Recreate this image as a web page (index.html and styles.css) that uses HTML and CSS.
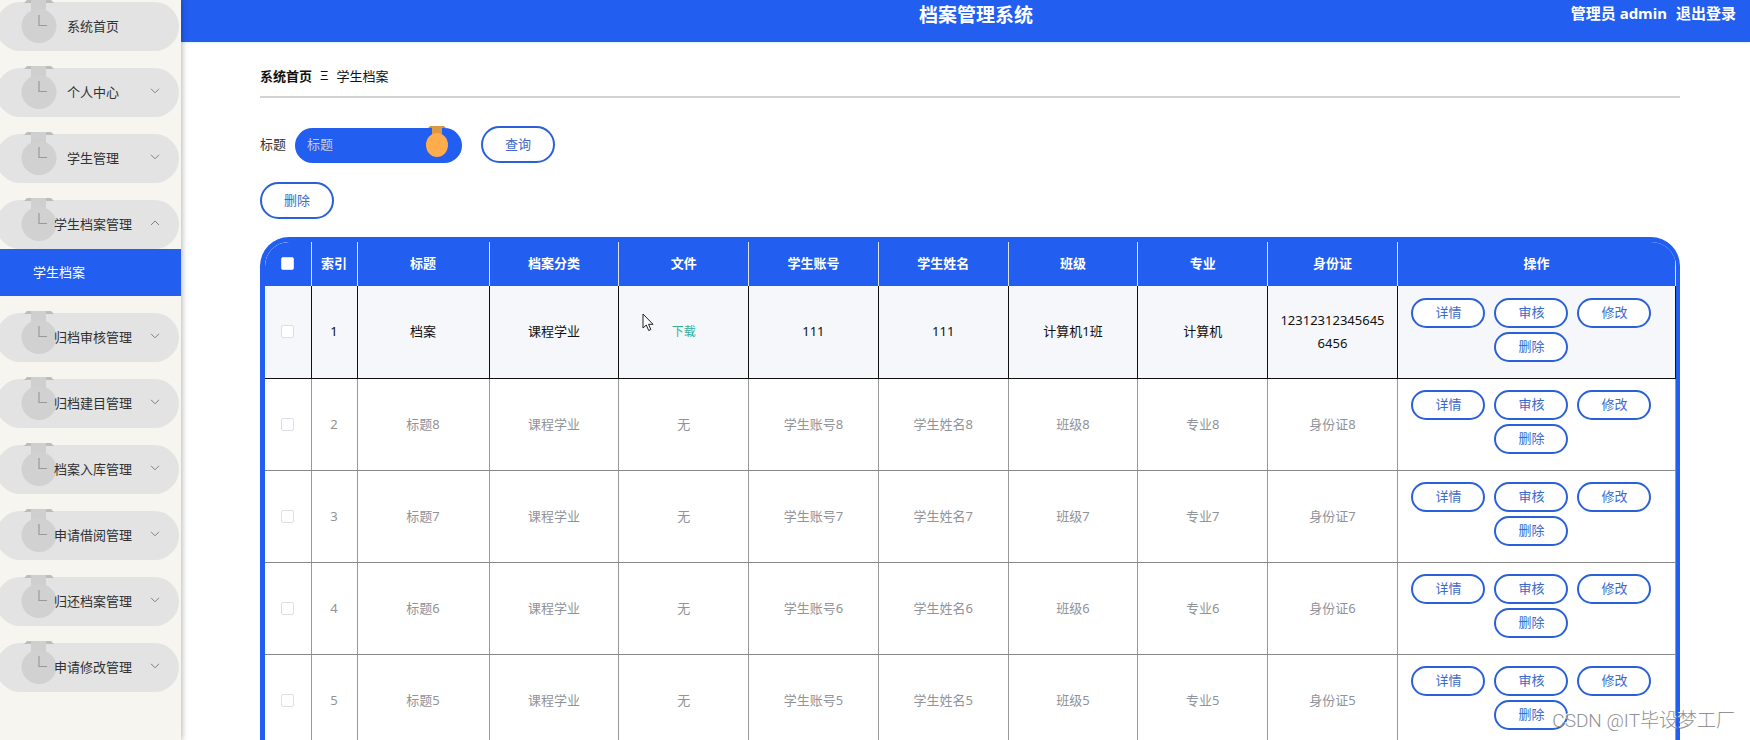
FILE: index.html
```
<!DOCTYPE html>
<html lang="zh-CN">
<head>
<meta charset="utf-8">
<title>档案管理系统</title>
<link rel="stylesheet" href="styles.css">
</head>
<body>
<svg width="0" height="0" class="defs" aria-hidden="true">
  <symbol id="watch" viewBox="0 0 36 44">
    <path d="M6 0h24l3 3H3z" fill="#bdbdbd"/>
    <path d="M10 0h15v12H10z" fill="#cfcfcf"/>
    <ellipse cx="18" cy="26" rx="17.5" ry="17" fill="#d1d1d1"/>
    <path d="M18 15v10.500h8" fill="none" stroke="#999" stroke-width="1.200"/>
  </symbol>
  <symbol id="down" viewBox="0 0 10 6"><path d="M1 .8l4 4 4-4" fill="none" stroke="#808080"/></symbol>
  <symbol id="up" viewBox="0 0 10 6"><path d="M1 5l4-4 4 4" fill="none" stroke="#808080"/></symbol>
</svg>
<div class="app">
  <nav class="side" id="side"></nav>
  <div class="page">
    <header class="top">
      <h1 class="title">档案管理系统</h1>
      <div class="user"><span>管理员 admin</span><a href="#">退出登录</a></div>
    </header>
    <main class="main">
      <div class="crumbs"><a href="#">系统首页</a><span class="sep">Ξ</span><span>学生档案</span></div>
      <form class="search">
        <label for="q">标题</label>
        <div class="field">
          <input id="q" type="text" placeholder="标题">
          <svg class="medal" viewBox="0 0 22 32" aria-hidden="true">
            <path d="M4 0h14l2 2H2z" fill="#d98f2b"/><path d="M6 0h10v9H6z" fill="#dc9747"/>
            <ellipse cx="11" cy="19" rx="11" ry="12" fill="#ffac4d"/>
          </svg>
        </div>
        <button type="button" class="btn big">查询</button>
      </form>
      <div class="tools"><button type="button" class="btn big">删除</button></div>
      <div class="frame">
        <table class="grid">
          <colgroup><col class="c-s"><col class="c-s"><col class="c-t"><col class="c-m"><col class="c-m"><col class="c-m"><col class="c-m"><col class="c-m"><col class="c-m"><col class="c-m"><col></colgroup>
          <thead><tr><th><input type="checkbox" aria-label="全选"></th><th>索引</th><th>标题</th><th>档案分类</th><th>文件</th><th>学生账号</th><th>学生姓名</th><th>班级</th><th>专业</th><th>身份证</th><th>操作</th></tr></thead>
          <tbody id="rows"></tbody>
        </table>
      </div>
    </main>
  </div>
  <svg class="cursor" viewBox="0 0 12 19" aria-hidden="true"><path d="M1 1v14l3.300-3 2.400 5.500 2.200-1-2.400-5.200H11z" fill="#fff" stroke="#222"/></svg>
  <div class="mark">CSDN @IT毕设梦工厂</div>
</div>
<script src="app.js"></script>
</body>
</html>
```
FILE: styles.css
```
* { box-sizing: border-box; }
body {
  margin: 0;
  font: 13px/20px "Noto Sans", "Noto Sans CJK SC", sans-serif;
  color: #333;
  background: #fff;
}
button, input { font: inherit; }
a { color: inherit; text-decoration: none; }
.defs { position: absolute; }
.app { position: relative; display: flex; height: 100vh; overflow: hidden; }

.side {
  flex: 0 0 181px;
  display: flex;
  flex-direction: column;
  gap: 17px;
  padding-top: 2px;
  background: #f6f5ef;
  box-shadow: 1px 0 6px rgba(0, 0, 0, .3);
  z-index: 2;
}
.item {
  position: relative;
  display: block;
  width: 183px;
  height: 49px;
  margin-left: -4px;
  padding: 0 0 2px 11px;
  border: 0;
  border-radius: 25px;
  background: #e3e3e3;
  color: #303133;
  text-align: center;
}
.item .watch { position: absolute; left: 25px; top: -2px; width: 36px; height: 44px; }
.item .label { position: relative; }
.item .arrow { position: absolute; right: 19px; top: 20px; width: 10px; height: 6px; }
.sub {
  display: flex;
  align-items: center;
  height: 47px;
  padding: 0 0 2px 33px;
  background: #225ef0;
  color: #fff;
}

.page { flex: 1; min-width: 0; display: flex; flex-direction: column; }
.top {
  position: relative;
  flex: 0 0 42px;
  padding: 4px 14px 0 35px;
  background: #225ef0;
  color: #fff;
  box-shadow: 0 1px 2px #d5f3fa;
  display: grid;
  grid-template-columns: 1fr auto 1fr;
}
.title { grid-column: 2; margin: 0; font-size: 19px; line-height: 22px; }
.user { display: flex; justify-content: flex-end; gap: 9px; font-size: 15px; line-height: 18px; font-weight: 700; }
.main { flex: 1; min-height: 0; padding: 24px 70px 0 79px; overflow: auto; scrollbar-width: none; }
.crumbs { display: flex; gap: 8px; padding-bottom: 10px; border-bottom: 2px solid #d2d2d2; color: #111; }
.crumbs a { font-weight: 700; }
.sep { font-family: "Liberation Sans", sans-serif; }
.search { display: flex; align-items: center; margin-top: 28px; }
.search label { padding-bottom: 2px; }
.field { position: relative; width: 167px; margin: 2px 19px 0 9px; }
.field input {
  display: block;
  width: 100%;
  height: 35px;
  padding: 0 12px 3px;
  border: 0;
  border-radius: 18px;
  background: #225ef0;
  color: #fff;
}
.field input::placeholder { color: #c5cbdc; opacity: 1; }
.medal { position: absolute; right: 14px; top: -2px; width: 22px; height: 32px; }
.btn {
  width: 74px;
  height: 30px;
  padding: 0;
  border: 2px solid #2a60d8;
  border-radius: 19px;
  background: #fff;
  color: #3c69cc;
}
.btn.big { height: 37px; padding-bottom: 2px; }
.tools { display: flex; margin: 19px 0 18px; }

.frame { border: 5px solid #225ef0; border-right-width: 4px; border-radius: 29px 29px 0 0; overflow: hidden; background: #fff; }
.grid { width: 100%; table-layout: fixed; border-collapse: collapse; }
.c-s { width: 46px; }
.c-t { width: 132px; }
.c-m { width: 9.2%; }
.grid th, .grid td { padding: 0 11px; text-align: center; border-right: 1px solid #999; }
.grid th { height: 44px; padding: 0 0 2px; background: #225ef0; color: #fff; border-color: #dce5fb; }
.grid thead th:first-child { border-top-left-radius: 24px; }
.grid td { height: 92px; color: #909399; border-bottom: 1px solid #888; line-height: 23px; word-break: break-all; }
.grid td:nth-child(-n+2) { padding: 0; }
.grid td:last-child { padding: 0 14px 4px 4px; }
.grid .on td { background: #f5f7fa; color: #111; border-color: #111; }
.grid input {
  appearance: none;
  display: block;
  width: 13px;
  height: 13px;
  margin: 0 auto;
  border: 1px solid #dcdfe6;
  border-radius: 2px;
  background: #fff;
}
.ops { display: flex; flex-wrap: wrap; justify-content: center; gap: 4px 9px; }
.ops .btn { line-height: 18px; padding-bottom: 2px; }
.file { color: #35b09c; font-size: 12px; }

.cursor { position: absolute; left: 642px; top: 313px; width: 12px; height: 19px; }
.mark {
  position: absolute;
  right: 15px;
  bottom: 7px;
  z-index: 3;
  font: 19px/24px Roboto, "Noto Sans CJK SC", sans-serif;
  font-weight: 300;
  color: #929292;
  text-shadow: -1px -1px 0 #fff;
}
```
FILE: app.js
```
const menu = ['系统首页', '个人中心', '学生管理', '学生档案管理', '归档审核管理', '归档建目管理',
  '档案入库管理', '申请借阅管理', '归还档案管理', '申请修改管理'];
document.getElementById('side').innerHTML = menu.map((name, i) => {
  const arrow = i ? `<svg class="arrow"><use href="#${i === 3 ? 'up' : 'down'}"/></svg>` : '';
  const item = `<button type="button" class="item"><svg class="watch"><use href="#watch"/></svg><span class="label">${name}</span>${arrow}</button>`;
  return i === 3 ? `<div>${item}<a class="sub" href="#">学生档案</a></div>` : item;
}).join('');

const data = [['档案', '课程学业', '<a class="file" href="#">下载</a>', '111', '111', '计算机1班', '计算机', '123123123456456456']];
for (let n = 8; n >= 5; n--) {
  data.push(['标题' + n, '课程学业', '无', '学生账号' + n, '学生姓名' + n, '班级' + n, '专业' + n, '身份证' + n]);
}
const ops = ['详情', '审核', '修改', '删除'].map(t => `<button type="button" class="btn">${t}</button>`).join('');
document.getElementById('rows').innerHTML = data.map((row, i) =>
  `<tr class="${i ? '' : 'on'}"><td><input type="checkbox" aria-label="选择第${i + 1}行"></td><td>${i + 1}</td>` +
  row.map(v => `<td>${v}</td>`).join('') + `<td><div class="ops">${ops}</div></td></tr>`).join('');
```
